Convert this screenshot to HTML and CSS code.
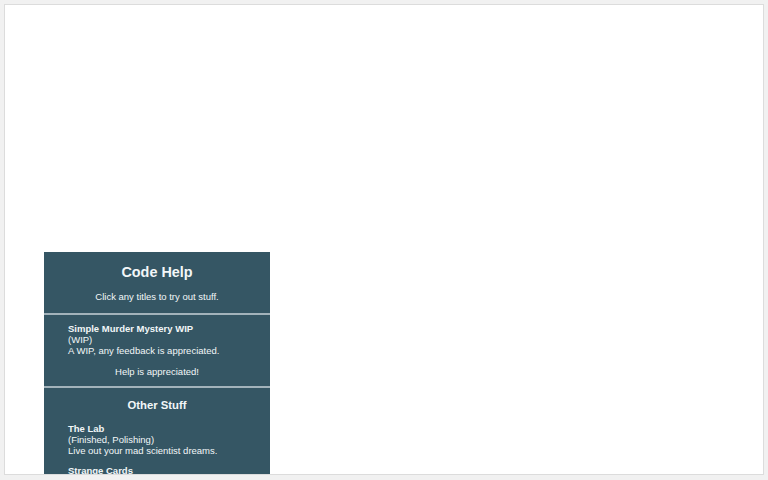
FILE: index.html
```html
<!DOCTYPE html>
<html>
<head>
<meta charset="utf-8">
<link rel="stylesheet" href="styles.css">
</head>
<body>
<div class="frame">
  <div class="panel">
    <div class="section head">
      <h2 class="title">Code Help</h2>
      <p class="center">Click any titles to try out stuff.</p>
    </div>
    <div class="section">
      <div class="item">
        <div class="name">Simple Murder Mystery WIP</div>
        <div>(WIP)</div>
        <div>A WIP, any feedback is appreciated.</div>
      </div>
      <p class="center">Help is appreciated!</p>
    </div>
    <div class="section last">
      <h3 class="subtitle">Other Stuff</h3>
      <div class="item">
        <div class="name">The Lab</div>
        <div>(Finished, Polishing)</div>
        <div>Live out your mad scientist dreams.</div>
      </div>
      <div class="item">
        <div class="name">Strange Cards</div>
      </div>
    </div>
  </div>
</div>
</body>
</html>
```
FILE: styles.css
```css
html, body {
  margin: 0;
  padding: 0;
  background: #f1f1f1;
  font-family: "Liberation Sans", Arial, sans-serif;
}
.frame {
  margin: 4px;
  border: 1px solid #dcdcdc;
  background: #ffffff;
  overflow: hidden;
  padding: 247px 0 0 39px;
  box-sizing: border-box;
  height: 471px;
  width: 760px;
}
.panel {
  width: 226px;
  background: #355664;
  color: #f2f6f8;
  font-size: 9.5px;
  line-height: 11px;
}
.section {
  border-bottom: 2px solid #a3b3bb;
  padding: 8px 24px 8px;
}
.section.head {
  padding: 11px 24px 10px;
}
.section.last {
  border-bottom: none;
  padding-top: 10px;
}
.title {
  margin: 0 0 10px;
  font-size: 14.4px;
  line-height: 18px;
  text-align: center;
  font-weight: bold;
}
.subtitle {
  margin: 0 0 11px;
  font-size: 11.3px;
  line-height: 14px;
  text-align: center;
  font-weight: bold;
}
.center {
  margin: 11px 0 0;
  text-align: center;
  line-height: 12px;
}
.head .center {
  margin: 0;
}
.item {
  margin-bottom: 9px;
}
.section .item:last-child {
  margin-bottom: 0;
}
.section > .item:first-child + .center {
  margin-top: 10px;
}
.name {
  font-weight: bold;
}
```
